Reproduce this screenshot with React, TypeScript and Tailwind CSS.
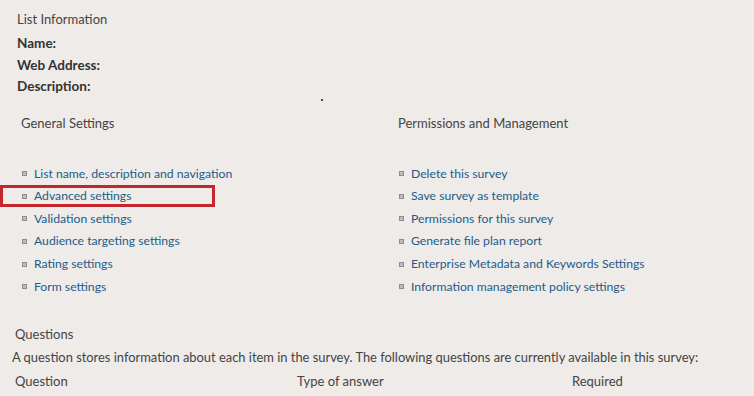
const generalLinks = [
  "List name, description and navigation",
  "Advanced settings",
  "Validation settings",
  "Audience targeting settings",
  "Rating settings",
  "Form settings",
];

const permissionLinks = [
  "Delete this survey",
  "Save survey as template",
  "Permissions for this survey",
  "Generate file plan report",
  "Enterprise Metadata and Keywords Settings",
  "Information management policy settings",
];

function LinkList({ items, highlight }: { items: string[]; highlight?: number }) {
  return (
    <ul className="flex flex-col">
      {items.map((label, i) => (
        <li key={label} className="relative flex h-[22.6px] items-center gap-[7px] pl-[1px]">
          <span className="h-[5px] w-[5px] shrink-0 border border-[#8c8c8c] bg-[#bdbdbd]" />
          <span className="text-[12.2px] text-[#1f5b8a]">{label}</span>
          {highlight === i && (
            <span className="absolute left-[-21px] top-[0px] h-[22px] w-[215px] border-[3px] border-[#c1272d]" />
          )}
        </li>
      ))}
    </ul>
  );
}

export default function App() {
  return (
    <div
      className="h-[396px] w-[754px] overflow-hidden bg-[#eeebe8] text-[#444]"
      style={{ fontFamily: 'Lato, "Open Sans", sans-serif' }}
    >
      <section className="px-[17px] pt-[10px]">
        <h2 className="text-[13px] leading-[18px] text-[#444]">List Information</h2>
        <dl className="mt-[5px] flex flex-col text-[13.5px] font-bold leading-[21.5px] text-[#333]">
          <dt>Name:</dt>
          <dt>Web Address:</dt>
          <dt>Description:</dt>
        </dl>
      </section>

      <div className="relative">
        <span className="absolute left-[321px] top-[1px] h-[2px] w-[2px] bg-[#444]" />
      </div>

      <div className="mt-[16px] grid grid-cols-[377px_1fr] pl-[21px]">
        <div>
          <h3 className="text-[13px] leading-[18px]">General Settings</h3>
          <div className="mt-[31px]">
            <LinkList items={generalLinks} highlight={1} />
          </div>
        </div>
        <div>
          <h3 className="text-[13px] leading-[18px]">Permissions and Management</h3>
          <div className="mt-[31px]">
            <LinkList items={permissionLinks} />
          </div>
        </div>
      </div>

      <section className="mt-[27px] pl-[12px]">
        <h3 className="pl-[3px] text-[13px] leading-[18px]">Questions</h3>
        <p className="mt-[5px] text-[12.9px] leading-[18px] text-[#444]">
          A question stores information about each item in the survey. The following questions are currently available in this survey:
        </p>
        <div className="mt-[6px] grid grid-cols-[282px_275px_1fr] pl-[3px] text-[13px] leading-[18px]">
          <span>Question</span>
          <span>Type of answer</span>
          <span>Required</span>
        </div>
      </section>
    </div>
  );
}
